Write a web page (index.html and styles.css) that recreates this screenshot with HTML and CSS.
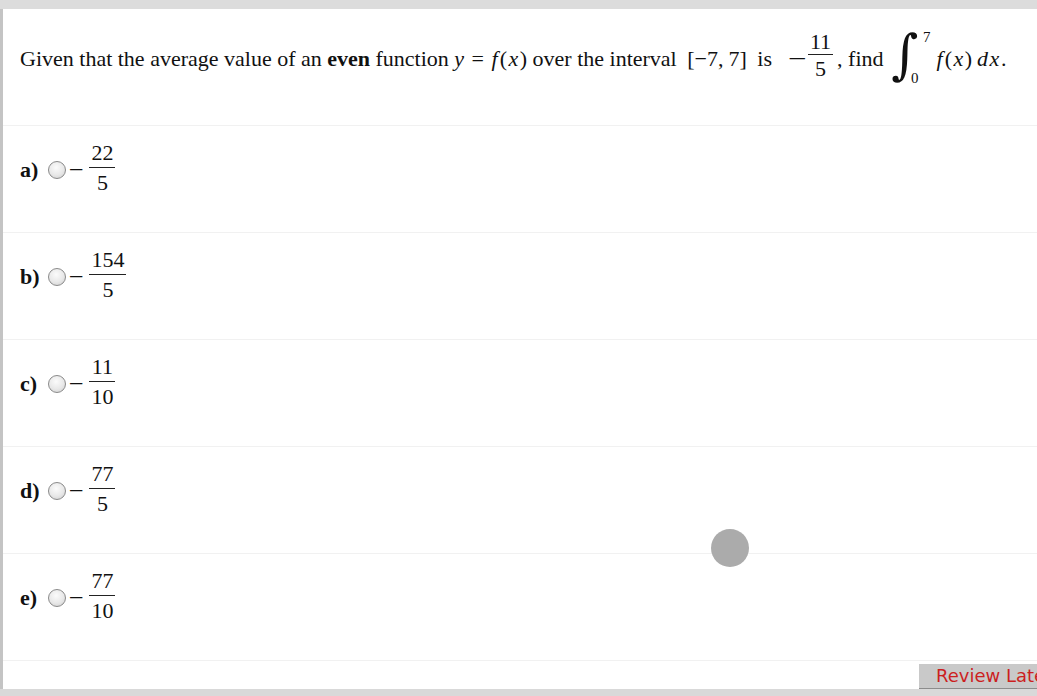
FILE: index.html
```html
<!DOCTYPE html>
<html>
<head>
<meta charset="utf-8">
<link rel="stylesheet" href="styles.css">
</head>
<body>
<div class="topbar"></div>
<div class="page">
  <div class="question">
    <p class="qtext">Given that the average value of an <b>even</b> function <i>y</i> <span class="rel">=</span> <i class="fn">f</i>(<i class="var">x</i>) over the interval <span class="gap"></span>[−7,<span class="thin"></span>7]<span class="gap"></span> is <span class="minus">−</span><span class="frac"><span class="num">11</span><span class="den">5</span></span>, find <span class="integral"><span class="intsign">∫</span><span class="upper">7</span><span class="lower">0</span></span> <i class="fn">f</i>(<i class="var">x</i>)<span class="thin"></span><i class="dx">dx</i>.</p>
  </div>
  <div class="option">
    <span class="label">a)</span><span class="radio"></span><span class="minus">−</span><span class="frac"><span class="num">22</span><span class="den">5</span></span>
  </div>
  <div class="option">
    <span class="label">b)</span><span class="radio"></span><span class="minus">−</span><span class="frac"><span class="num">154</span><span class="den">5</span></span>
  </div>
  <div class="option">
    <span class="label">c)</span><span class="radio"></span><span class="minus">−</span><span class="frac"><span class="num">11</span><span class="den">10</span></span>
  </div>
  <div class="option">
    <span class="label">d)</span><span class="radio"></span><span class="minus">−</span><span class="frac"><span class="num">77</span><span class="den">5</span></span>
  </div>
  <div class="option">
    <span class="label">e)</span><span class="radio"></span><span class="minus">−</span><span class="frac"><span class="num">77</span><span class="den">10</span></span>
  </div>
  <div class="footer">
    <button class="review">Review Later</button>
  </div>
</div>
<div class="bottombar"></div>
<div class="touch"></div>
</body>
</html>
```

FILE: styles.css
```css
html, body {
  margin: 0;
  padding: 0;
  width: 1037px;
  height: 696px;
  overflow: hidden;
  background: #ffffff;
  font-family: "Liberation Serif", "Times New Roman", serif;
  color: #111;
}
.topbar {
  height: 9px;
  background: #dcdcdc;
}
.page {
  border-left: 3px solid #c4c4c4;
  height: 680px;
  display: flex;
  flex-direction: column;
}
.question {
  height: 117px;
  flex: none;
  border-bottom: 1px solid #f1f1f1;
  padding: 21px 0 0 17px;
  box-sizing: border-box;
}
.qtext {
  margin: 0;
  font-size: 22px;
  line-height: 22px;
  white-space: nowrap;
}
.rel { padding: 0 2px; }
.fn { padding-right: 2px; }
.var { padding: 0 1.5px; }
.dx { letter-spacing: 1.5px; }
.gap { display: inline-block; width: 5px; }
.thin { display: inline-block; width: 5px; }
.minus {
  display: inline-block;
  transform: scaleX(1.2);
}
.qtext .minus {
  transform: scaleX(1.5);
  margin: 0 4px 0 13px;
}
.frac {
  display: inline-flex;
  flex-direction: column;
  align-items: stretch;
  text-align: center;
  line-height: 22px;
  vertical-align: 17px;
  margin: 0 1px;
}
.frac .num {
  padding: 0 2px 3px;
  border-bottom: 1px solid #222;
}
.frac .den {
  padding: 4px 2px 0;
}
.qtext .frac {
  margin-right: 4px;
}
.qtext .frac .num { padding-bottom: 1px; }
.qtext .frac .den { padding-top: 3px; }
.integral {
  display: inline-block;
  width: 38px;
  vertical-align: -17px;
  margin-left: 4px;
}
.intsign {
  float: left;
  width: 24px;
  height: 56px;
  font-family: "DejaVu Serif", serif;
  font-size: 40px;
  line-height: 56px;
  text-align: center;
  transform: translateY(-4px) scale(1.3, 1.35);
}
.upper {
  display: block;
  font-size: 15px;
  line-height: 15px;
  height: 41px;
  text-indent: 6px;
}
.lower {
  display: block;
  font-size: 15px;
  line-height: 15px;
  text-indent: -6px;
}
.option {
  height: 107px;
  flex: none;
  border-bottom: 1px solid #f1f1f1;
  box-sizing: border-box;
  padding: 16px 0 0 17px;
  font-size: 22px;
  line-height: 22px;
  white-space: nowrap;
}
.label {
  font-weight: bold;
  display: inline-block;
  width: 28px;
}
.radio {
  display: inline-block;
  width: 16px;
  height: 16px;
  border-radius: 50%;
  border: 1px solid #8a8a8a;
  background: radial-gradient(circle at 45% 35%, #fbfbfb 0%, #e8e8e8 55%, #cbcbcb 100%);
  vertical-align: -2px;
  margin-right: 4px;
}
.option .frac {
  margin-left: 7px;
}
.footer {
  flex: 1;
  display: flex;
  padding-left: 916px;
  padding-top: 3px;
}
.review {
  flex: none;
  width: 150px;
  height: 25px;
  margin: 0;
  padding: 0 0 0 17px;
  text-align: left;
  border: none;
  border-bottom: 1px solid #8c8c8c;
  background: #c9c9c9;
  color: #cc1f1f;
  font-family: "DejaVu Sans", Verdana, sans-serif;
  font-size: 18px;
  line-height: 24px;
  white-space: nowrap;
}
.bottombar {
  height: 7px;
  background: #d9d9d9;
}
.touch {
  position: absolute;
  left: 711px;
  top: 529px;
  width: 38px;
  height: 38px;
  border-radius: 50%;
  background: #ababab;
}
```
